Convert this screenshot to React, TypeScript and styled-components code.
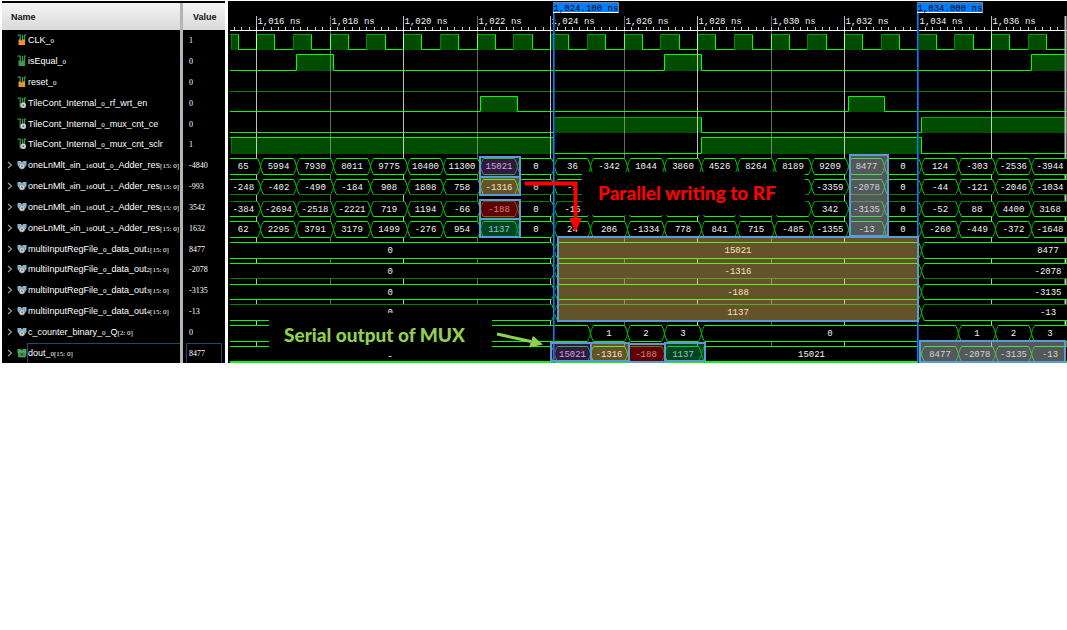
import React from "react";
import styled, { createGlobalStyle } from "styled-components";

const GlobalStyle = createGlobalStyle`
  * { box-sizing: border-box; }
  body { margin: 0; background: #fff; }
`;

const Viewer = styled.main`
  display: flex;
  gap: 3px;
  padding: 1px 0 0 2px;
  height: 363px;
  font-family: "Liberation Sans", Arial, sans-serif;
`;

const SignalPanel = styled.section`
  flex: 0 0 223px;
  padding-top: 2px;
  background: #000;
`;

const SignalTable = styled.table`
  width: 100%;
  height: 360px;
  border-collapse: separate;
  border-spacing: 0;
  table-layout: fixed;
`;

const HeaderCell = styled.th<{ $first?: boolean }>`
  width: ${(p) => (p.$first ? "181px" : "auto")};
  height: 27px;
  padding: 0 0 0 ${(p) => (p.$first ? "9px" : "10px")};
  border-right: ${(p) => (p.$first ? "3px solid #b4b4b4" : "0")};
  background: linear-gradient(#f4f4f4, #d9d9d9);
  color: #111;
  font-size: 9px;
  line-height: 14px;
  text-align: left;
`;

const NameCell = styled.th`
  padding: 0;
  border-right: 3px solid #b4b4b4;
  font-weight: 400;
  text-align: left;
`;

const ValueCell = styled.td`
  padding: 0 3px;
`;

const NameLine = styled.div`
  display: flex;
  align-items: center;
  height: 20px;
  padding-left: 4px;

  svg {
    flex: none;
  }
`;

const Expander = styled.button`
  display: flex;
  flex: none;
  align-items: center;
  justify-content: center;
  width: 8px;
  height: 12px;
  margin-right: 3px;
  padding: 0;
  border: 0;
  background: none;
`;

const Spacer = styled.span`
  flex: none;
  width: 8px;
  margin-right: 3px;
`;

const Label = styled.span<{ $selected?: boolean }>`
  flex: 1;
  min-width: 0;
  height: 20px;
  border: 1px solid ${(p) => (p.$selected ? "#24486c" : "transparent")};
  border-width: 1px 0 0 1px;
  color: #fff;
  font-size: 9px;
  line-height: 19px;
  white-space: nowrap;
`;

const Digits = styled.small`
  font-family: "Liberation Serif", "Times New Roman", serif;
  font-size: 7px;
`;

const ValueBox = styled.span<{ $selected?: boolean }>`
  display: block;
  height: 20px;
  padding-left: 2px;
  border: 1px solid ${(p) => (p.$selected ? "#24486c" : "transparent")};
  border-bottom: 0;
  color: #fff;
  font-family: "Liberation Serif", "Times New Roman", serif;
  font-size: 8px;
  line-height: 20px;
`;

const WavePanel = styled.section`
  flex: 1 1 0;
  min-width: 0;
  background: #000;
`;

const WaveSvg = styled.svg`
  display: block;
  width: 100%;
  height: 362px;
  text {
    font-family: "Liberation Mono", "Courier New", monospace;
    font-size: 9px;
    fill: #f4f4f4;
  }
  text.note {
    font-family: Lato, Calibri, sans-serif;
    font-size: 19px;
    font-weight: 900;
  }
`;

type Kind = "clock" | "signal" | "internal" | "bus" | "busOut";

const signals: { name: string; value: string; kind: Kind }[] = [
  { name: "CLK_0", value: "1", kind: "clock" },
  { name: "isEqual_0", value: "0", kind: "signal" },
  { name: "reset_0", value: "0", kind: "clock" },
  { name: "TileCont_Internal_0_rf_wrt_en", value: "0", kind: "internal" },
  { name: "TileCont_Internal_0_mux_cnt_ce", value: "0", kind: "internal" },
  { name: "TileCont_Internal_0_mux_cnt_sclr", value: "1", kind: "internal" },
  { name: "oneLnMlt_8in_16out_0_Adder_res[15: 0]", value: "-4840", kind: "bus" },
  { name: "oneLnMlt_8in_16out_1_Adder_res[15: 0]", value: "-993", kind: "bus" },
  { name: "oneLnMlt_8in_16out_2_Adder_res[15: 0]", value: "3542", kind: "bus" },
  { name: "oneLnMlt_8in_16out_3_Adder_res[15: 0]", value: "1632", kind: "bus" },
  { name: "multiInputRegFile_0_data_out1[15: 0]", value: "8477", kind: "bus" },
  { name: "multiInputRegFile_0_data_out2[15: 0]", value: "-2078", kind: "bus" },
  { name: "multiInputRegFile_0_data_out3[15: 0]", value: "-3135", kind: "bus" },
  { name: "multiInputRegFile_0_data_out4[15: 0]", value: "-13", kind: "bus" },
  { name: "c_counter_binary_0_Q[2: 0]", value: "0", kind: "bus" },
  { name: "dout_0[15: 0]", value: "8477", kind: "busOut" },
];

function SignalIcon({ kind }: { kind: Kind }) {
  if (kind === "bus" || kind === "busOut") {
    const out = kind === "busOut";
    return (
      <svg width="10" height="10" viewBox="0 0 10 10" aria-hidden="true">
        <path d="M0.5 1H4L5 2.5L6 1H9.5V5L7.5 7.5H2.5L0.5 5Z" fill={out ? "#4d9f58" : "#86b4cc"} />
        {out ? (
          <path d="M1.5 4H8.5V9H1.5Z" fill="#358c42" stroke="#7ab581" strokeWidth="0.6" />
        ) : (
          <circle cx="5" cy="6.3" r="2.8" fill="#cfcfcf" stroke="#777" strokeWidth="0.6" />
        )}
        <circle cx="5" cy="6.3" r="1" fill={out ? "#1f5c2a" : "#777"} />
      </svg>
    );
  }
  return (
    <svg width="10" height="12" viewBox="0 0 10 12" aria-hidden="true">
      <path d="M0.5 1.2H3.2V10.5M5.5 1V10H7.5V1.2H9" fill="none" stroke="#2e9a45" strokeWidth="1.3" />
      {kind === "clock" && <path d="M1.5 5.5H3.5L4.5 6.8L5.5 5.5H8V11H1.5Z" fill="#f0922b" />}
      {kind === "signal" && <path d="M1.5 5.5H3.5L4.5 6.8L5.5 5.5H8V11H1.5Z" fill="#3f9a4e" />}
      {kind === "internal" && (
        <>
          <circle cx="6.3" cy="8.3" r="2.7" fill="#d4d4d4" />
          <circle cx="6.3" cy="8.3" r="1" fill="#666" />
        </>
      )}
    </svg>
  );
}

function SignalName({ name }: { name: string }) {
  return (
    <>
      {name.split(/(\[.*\]|\d+)/).map((part, i) => (i % 2 ? <Digits key={i}>{part}</Digits> : part))}
    </>
  );
}

/* Horizontal scale of the waveform: pixels per nanosecond. */
const NS = 36.75;
const at = (t: number) => Math.round(28.5 + (t - 1016) * NS - 0.5) + 0.5;
const LEFT = 2;
const FAR = 4000;
const BRIGHT = "#00ff00";
const DIM = "#008400";
const FILL = "#004c00";

type Pulse = [number, number];

function Digital({ hi, lo, pulses, dimTop }: { hi: number; lo: number; pulses: Pulse[]; dimTop?: boolean }) {
  const edges = pulses.map(([a, b]) => [Math.max(LEFT + 1.5, at(a)), b > 1038 ? FAR : at(b)]);
  let x = LEFT;
  return (
    <g fill="none">
      {edges.map(([a, b], i) => {
        const start = x;
        x = b;
        return (
          <g key={i}>
            {a > 4 && <path d={`M${start} ${lo}H${a}`} stroke={BRIGHT} />}
            <rect x={a} y={hi} width={b - a} height={lo - hi + 0.5} fill={FILL} />
            <path d={`M${a} ${lo}V${hi}`} stroke={a > 4 && (i % 2 || pulses.length < 4) ? BRIGHT : DIM} />
            <path d={`M${a < 4 ? LEFT : a} ${hi}H${b}`} stroke={dimTop ? "#00a800" : BRIGHT} />
            <path d={`M${b} ${hi}V${lo}`} stroke={BRIGHT} />
          </g>
        );
      })}
      <path d={`M${x} ${lo}H${FAR}`} stroke={BRIGHT} />
    </g>
  );
}

type Segment = [number, string];

function Bus({ top, bottom, segments, tail, dimTop, dimBottom }: {
  top: number; bottom: number; segments: Segment[]; tail?: number; dimTop?: boolean; dimBottom?: boolean;
}) {
  const mid = (top + bottom) / 2;
  const base = Math.floor(mid) + 3;
  return (
    <g fill="none">
      <rect x={LEFT} y={top} width={FAR} height={bottom - top} fill="#000" />
      {segments.map(([t, value], i) => {
        const first = i === 0;
        const last = i === segments.length - 1;
        const a = first ? -2 : at(t);
        const b = last ? FAR : at(segments[i + 1][0]);
        const center = last ? tail ?? 822 : (a + b) / 2;
        const l = first ? LEFT : a + 3;
        const r = last ? FAR : b - 3;
        return (
          <g key={i}>
            <path d={`M${l} ${top}H${r}`} stroke={dimTop ? DIM : BRIGHT} />
            <path d={`M${l} ${bottom}H${r}`} stroke={dimBottom ? DIM : BRIGHT} />
            {!first && (
              <>
                <path d={`M${a - 3} ${top}L${a - 1} ${top + 4}L${a + 1} ${bottom - 4}L${a + 3} ${bottom}`} stroke="#00e000" />
                <path d={`M${a + 3} ${top}L${a + 1} ${top + 4}L${a - 1} ${bottom - 4}L${a - 3} ${bottom}`} stroke="#00b000" />
              </>
            )}
            <text x={center} y={base} textAnchor="middle">{value}</text>
          </g>
        );
      })}
    </g>
  );
}

const everyNs = (values: string): Segment[] =>
  values.split(" ").map((v, i) => [1015.1 + i, v === "." ? "" : v]);

const regFile = (mid: string, end: string): Segment[] => [[1015.1, "0"], [1024.1, mid], [1034.1, end]];

const clockPulses: Pulse[] = [[1015, 1015.5], ...Array.from({ length: 23 }, (_, i): Pulse => [1016 + i, 1016.5 + i])];

const gridTimes = [1016, 1018, 1020, 1022, 1024, 1026, 1028, 1030, 1032, 1034, 1036];

const BLUE = "#5b9bd5";
const tints = {
  purple: "rgba(120,60,160,.4)",
  gold: "rgba(250,205,100,.4)",
  red: "rgba(190,0,0,.5)",
  green: "rgba(0,150,80,.45)",
  grey: "rgba(165,175,180,.5)",
};

function Highlight({ x, y, w, h, tint }: { x: number; y: number; w: number; h: number; tint: keyof typeof tints }) {
  return <rect x={x} y={y} width={w} height={h} fill={tints[tint]} stroke={BLUE} strokeWidth="2" />;
}

function Cursor({ t, label }: { t: number; label: string }) {
  const x = at(t);
  return (
    <g>
      <rect x={x - 1.5} y="2" width="1" height="361" fill="#0880f8" />
      <rect x={x - 0.5} y="13" width="1" height="350" fill="#0a4c98" />
      <rect x={x - 1.5} y="2" width="65" height="11" fill="#0080ff" />
      <path d={`M${x - 1.5} 2.5H${x + 64}V13`} fill="none" stroke="#808080" />
      <path d={`M${x - 1.5} 12.5H${x + 64}`} fill="none" stroke="#fff" />
      <text x={x - 1} y="11" style={{ fill: "#000" }}>{label}</text>
    </g>
  );
}

function Waveform() {
  return (
    <WaveSvg role="img" aria-label="Simulation waveform">
      <g transform="translate(0 -1)">
        {/* ruler */}
        <path d={`M${LEFT} 30.5H${FAR}`} stroke="#fff" />
        {Array.from({ length: 115 }, (_, i) => {
          const t = 1015.4 + i * 0.2;
          return <path key={i} d={`M${at(t)} 27V30`} stroke="#ccc" />;
        })}

        <Digital hi={34.5} lo={49.5} pulses={clockPulses} dimTop />
        <Digital hi={54.5} lo={70.5} pulses={[[1017.1, 1018.1], [1027.1, 1028.1], [1037.1, 1040]]} />
        <path d={`M${LEFT} 91.5H${FAR}`} stroke={DIM} />
        <Digital hi={96.5} lo={111.5} pulses={[[1022.1, 1023.1], [1032.1, 1033.1]]} />
        <Digital hi={117.5} lo={132.5} pulses={[[1024.1, 1028.1], [1034.1, 1040]]} dimTop />
        <Digital hi={137.5} lo={153.5} pulses={[[1015, 1024.1], [1028.1, 1034.1]]} />

        {/* time grid */}
        {gridTimes.map((t, i) => (
          <g key={t}>
            <path d={`M${at(t)} 16V362`} stroke="#fff" strokeOpacity={i % 2 ? 0.4 : 0.75} />
            <text x={at(t) + 1} y="24">{`${t.toLocaleString("en-US")} ns`}</text>
          </g>
        ))}
        <path d={`M${at(1038)} 16V362`} stroke="#c0c0c0" strokeWidth="2" />

        <Bus top={158.5} bottom={174.5} segments={everyNs("65 5994 7930 8011 9775 10400 11300 15021 0 36 -342 1044 3860 4526 8264 8189 9209 8477 0 124 -303 -2536 -3944")} />
        <Bus top={179.5} bottom={194.5} dimBottom segments={everyNs("-248 -402 -490 -184 908 1808 758 -1316 0 -1 . . . . . . -3359 -2078 0 -44 -121 -2046 -1034")} />
        <Bus top={201.5} bottom={216.5} dimTop segments={everyNs("-384 -2694 -2518 -2221 719 1194 -66 -188 0 -15 . . . . . . 342 -3135 0 -52 88 4400 3168")} />
        <Bus top={221.5} bottom={237.5} segments={everyNs("62 2295 3791 3179 1499 -276 954 1137 0 24 206 -1334 778 841 715 -485 -1355 -13 0 -260 -449 -372 -1648")} />
        <Bus top={242.5} bottom={258.5} tail={820} segments={regFile("15021", "8477")} />
        <Bus top={263.5} bottom={278.5} tail={820} dimBottom segments={regFile("-1316", "-2078")} />
        <Bus top={284.5} bottom={299.5} tail={820} segments={regFile("-188", "-3135")} />
        <Bus top={304.5} bottom={320.5} tail={820} dimTop segments={regFile("1137", "-13")} />
        <Bus top={325.5} bottom={341.5} segments={[[1015.1, ""], [1025.1, "1"], [1026.1, "2"], [1027.1, "3"], [1028.1, "0"], [1035.1, "1"], [1036.1, "2"], [1037.1, "3"]]} />
        <Bus top={346.5} bottom={361.5} segments={[[1015.1, "0"], [1024.1, "15021"], [1025.1, "-1316"], [1026.1, "-188"], [1027.1, "1137"], [1028.1, "15021"], [1034.1, "8477"], [1035.1, "-2078"], [1036.1, "-3135"], [1037.1, "-13"]]} />
        <path d={`M${LEFT} 362H${FAR}`} stroke={BRIGHT} strokeWidth="2" />

        <Cursor t={1024.1} label="1,024.100 ns" />
        <Cursor t={1034} label="1,034.000 ns" />

        {/* highlighted samples */}
        <Highlight x={252} y={157} w={40} h={20} tint="purple" />
        <Highlight x={252} y={177} w={40} h={18} tint="gold" />
        <Highlight x={252} y={200} w={40} h={19} tint="red" />
        <Highlight x={252} y={219} w={40} h={18} tint="green" />
        <Highlight x={622} y={155} w={38} h={81} tint="grey" />
        <Highlight x={330} y={237} w={360} h={84} tint="gold" />
        <Highlight x={323} y={343} w={40} h={18} tint="purple" />
        <Highlight x={363} y={343} w={38} h={18} tint="gold" />
        <Highlight x={401} y={344} w={36} h={18} tint="red" />
        <Highlight x={437} y={343} w={40} h={18} tint="green" />
        <Highlight x={692} y={341} w={145} h={21} tint="grey" />

        {/* annotations */}
        <rect x="354" y="172" width="223" height="43" fill="#000" />
        <text className="note" x="370" y="200" style={{ fill: "#ff0000" }}>Parallel writing to RF</text>
        <path d="M297 183.5H347.5V219" fill="none" stroke="#ff0000" strokeWidth="4" />
        <path d="M341 218H354L347.5 232Z" fill="#ff0000" />
        <rect x="41" y="313" width="223" height="43" fill="#000" />
        <text className="note" x="56" y="342" style={{ fill: "#92d050" }}>Serial output of MUX</text>
        <path d="M269 334L303 341.5" stroke="#92d050" strokeWidth="3" />
        <path d="M305 336L315 344.5L301 347.5Z" fill="#92d050" />
      </g>
    </WaveSvg>
  );
}

export default function App() {
  return (
    <>
      <GlobalStyle />
      <Viewer>
        <SignalPanel>
          <SignalTable>
            <thead>
              <tr>
                <HeaderCell scope="col" $first>Name</HeaderCell>
                <HeaderCell scope="col">Value</HeaderCell>
              </tr>
            </thead>
            <tbody>
              {signals.map((s) => {
                const selected = s.kind === "busOut";
                const isBus = s.kind === "bus" || selected;
                return (
                  <tr key={s.name}>
                    <NameCell scope="row">
                      <NameLine>
                        {isBus ? (
                          <Expander aria-label={`Expand ${s.name}`}>
                            <svg width="6" height="8" viewBox="0 0 6 8">
                              <path d="M1 1L4.5 4L1 7" fill="none" stroke="#9a9a9a" strokeWidth="1.2" />
                            </svg>
                          </Expander>
                        ) : (
                          <Spacer />
                        )}
                        <SignalIcon kind={s.kind} />
                        <Label $selected={selected}><SignalName name={s.name} /></Label>
                      </NameLine>
                    </NameCell>
                    <ValueCell><ValueBox $selected={selected}>{s.value}</ValueBox></ValueCell>
                  </tr>
                );
              })}
            </tbody>
          </SignalTable>
        </SignalPanel>
        <WavePanel>
          <Waveform />
        </WavePanel>
      </Viewer>
    </>
  );
}
